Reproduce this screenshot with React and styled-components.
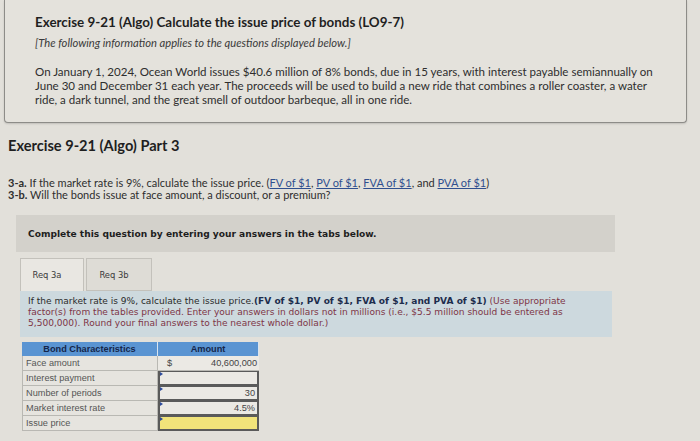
import React from 'react';
import styled, { createGlobalStyle } from 'styled-components';

const GlobalStyle = createGlobalStyle`
  html, body {
    margin: 0;
    padding: 0;
    background-color: #e2e0da;
  }
  body {
    font-family: 'Lato', 'Liberation Sans', sans-serif;
    color: #2b2b2b;
  }
`;

const Page = styled.div`
  width: 700px;
  height: 441px;
  overflow: hidden;
  display: flex;
  flex-direction: column;
`;

const InfoBox = styled.div`
  margin-left: 4px;
  width: 651px;
  padding: 14px 0 15px 30px;
  background-color: #e4e2dc;
  border: 1px solid #8d8c88;
  border-top: none;
  border-radius: 0 0 4px 4px;
  box-shadow: 0 1px 2px rgba(0, 0, 0, 0.15);
`;

const Title = styled.div`
  font-size: 13.4px;
  font-weight: 700;
  line-height: 16px;
  color: #1f1f1f;
`;

const Note = styled.div`
  margin-top: 6px;
  font-size: 11.2px;
  font-style: italic;
  line-height: 14px;
  color: #3a3a3a;
`;

const Para = styled.p`
  margin: 15px 0 0;
  font-size: 11.55px;
  line-height: 14px;
  color: #2e2e2e;
  white-space: nowrap;
`;

const PartTitle = styled.div`
  margin: 15px 0 0 8px;
  font-size: 14.6px;
  font-weight: 700;
  line-height: 16px;
  color: #1f1f1f;
`;

const Question = styled.div`
  margin: 23px 0 0 8px;
  font-size: 11px;
  line-height: 12px;
  color: #2e2e2e;
  b {
    font-weight: 700;
  }
`;

const Link = styled.span`
  color: #2f4f8f;
  text-decoration: underline;
`;

const CompleteBar = styled.div`
  margin: 14px 0 0 16px;
  width: 587px;
  height: 37px;
  padding-left: 12px;
  display: flex;
  align-items: center;
  background-color: #d3d1cb;
  font-family: 'DejaVu Sans', Verdana, sans-serif;
  font-size: 9.1px;
  font-weight: 700;
  color: #1e1e1e;
`;

const Tabs = styled.div`
  margin: 6px 0 0 20px;
  display: flex;
  gap: 2px;
`;

const Tab = styled.div`
  width: ${(p) => p.$w}px;
  height: 33px;
  box-sizing: border-box;
  display: flex;
  align-items: center;
  justify-content: center;
  padding-right: 10px;
  font-family: 'DejaVu Sans', Verdana, sans-serif;
  font-size: 8.4px;
  color: #3a3a3a;
  background-color: ${(p) => (p.$active ? '#e9e7e2' : '#dedcd6')};
  border: 1px solid #c3c1bb;
  border-bottom: ${(p) => (p.$active ? 'none' : '1px solid #c3c1bb')};
`;

const Instruction = styled.div`
  margin-left: 20px;
  width: 592px;
  height: 46px;
  padding: 5px 0 0 8px;
  box-sizing: border-box;
  background-color: #cdd9de;
  font-family: 'DejaVu Sans', Verdana, sans-serif;
  font-size: 9.05px;
  line-height: 11px;
  color: #2a2a2a;
  white-space: nowrap;
`;

const Strong = styled.b`
  color: #1d2d4d;
`;

const Hint = styled.span`
  color: #7e3546;
`;

const Table = styled.div`
  margin: 5px 0 0 22px;
  width: 237px;
  display: grid;
  grid-template-columns: 136px 101px;
  font-family: 'Liberation Sans', Arial, sans-serif;
  font-size: 9.2px;
`;

const HeadCell = styled.div`
  height: 14px;
  display: flex;
  align-items: center;
  justify-content: center;
  background-color: #5a94d2;
  border-right: 1px solid #d8e4f0;
  font-weight: 700;
  color: #15264a;
`;

const LabelCell = styled.div`
  height: 15px;
  box-sizing: border-box;
  display: flex;
  align-items: center;
  padding-left: 3px;
  border: 1px solid #b9b8b3;
  border-top: none;
  color: #555;
  background-color: #e6e4df;
`;

const ValueCell = styled.div`
  height: 15px;
  box-sizing: border-box;
  display: flex;
  align-items: center;
  justify-content: space-between;
  padding: 0 2px 0 9px;
  border-bottom: 1px solid #b9b8b3;
  color: #444;
  background-color: #ebe9e4;
`;

const InputCell = styled.div`
  position: relative;
  height: 15px;
  box-sizing: border-box;
  display: flex;
  align-items: center;
  justify-content: flex-end;
  padding-right: 2px;
  border: 2px solid #5a5a5a;
  border-top-width: 1px;
  color: #444;
  background-color: ${(p) => (p.$yellow ? '#f1e37a' : '#ebe9e4')};
  &::before {
    content: '';
    position: absolute;
    left: 0;
    top: 0;
    border-left: 3px solid #2c4a9a;
    border-top: 2px solid transparent;
    border-bottom: 2px solid transparent;
  }
`;

const rows = [
  { label: 'Interest payment', value: '' },
  { label: 'Number of periods', value: '30' },
  { label: 'Market interest rate', value: '4.5%' },
  { label: 'Issue price', value: '', yellow: true },
];

const App = () => {
  return (
    <Page>
      <GlobalStyle />
      <InfoBox>
        <Title>Exercise 9-21 (Algo) Calculate the issue price of bonds (LO9-7)</Title>
        <Note>[The following information applies to the questions displayed below.]</Note>
        <Para>
          On January 1, 2024, Ocean World issues $40.6 million of 8% bonds, due in 15 years, with interest payable semiannually on
          <br />
          June 30 and December 31 each year. The proceeds will be used to build a new ride that combines a roller coaster, a water
          <br />
          ride, a dark tunnel, and the great smell of outdoor barbeque, all in one ride.
        </Para>
      </InfoBox>

      <PartTitle>Exercise 9-21 (Algo) Part 3</PartTitle>

      <Question>
        <div>
          <b>3-a.</b> If the market rate is 9%, calculate the issue price. (<Link>FV of $1</Link>, <Link>PV of $1</Link>,{' '}
          <Link>FVA of $1</Link>, and <Link>PVA of $1</Link>)
        </div>
        <div>
          <b>3-b.</b> Will the bonds issue at face amount, a discount, or a premium?
        </div>
      </Question>

      <CompleteBar>Complete this question by entering your answers in the tabs below.</CompleteBar>

      <Tabs>
        <Tab $w={64} $active>Req 3a</Tab>
        <Tab $w={66}>Req 3b</Tab>
      </Tabs>

      <Instruction>
        If the market rate is 9%, calculate the issue price.<Strong>(FV of $1, PV of $1, FVA of $1, and PVA of $1)</Strong>{' '}
        <Hint>
          (Use appropriate
          <br />
          factor(s) from the tables provided. Enter your answers in dollars not in millions (i.e., $5.5 million should be entered as
          <br />
          5,500,000). Round your final answers to the nearest whole dollar.)
        </Hint>
      </Instruction>

      <Table>
        <HeadCell>Bond Characteristics</HeadCell>
        <HeadCell>Amount</HeadCell>
        <LabelCell>Face amount</LabelCell>
        <ValueCell>
          <span>$</span>
          <span>40,600,000</span>
        </ValueCell>
        {rows.map((r) => (
          <React.Fragment key={r.label}>
            <LabelCell>{r.label}</LabelCell>
            <InputCell $yellow={r.yellow}>{r.value}</InputCell>
          </React.Fragment>
        ))}
      </Table>
    </Page>
  );
};

export default App;
